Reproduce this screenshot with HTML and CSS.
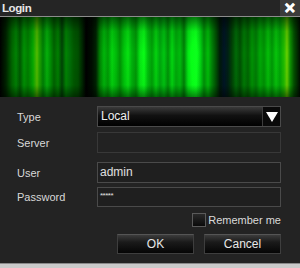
FILE: index.html
```html
<!DOCTYPE html>
<html>
<head>
<meta charset="utf-8">
<link rel="stylesheet" href="styles.css">
</head>
<body>
<div class="dialog">
  <div class="titlebar">
    <span class="title">Login</span>
    <span class="close">✕</span>
  </div>
  <div class="banner"></div>
  <div class="form">
    <div class="row r-type">
      <span class="label">Type</span>
      <div class="select">
        <span class="select-text">Local</span>
        <span class="arrow"><svg width="12" height="10" viewBox="0 0 12 10"><path d="M0 0 H12 L6 10 Z" fill="#fff"/></svg></span>
      </div>
    </div>
    <div class="row r-server">
      <span class="label">Server</span>
      <div class="field disabled"></div>
    </div>
    <div class="row r-user">
      <span class="label">User</span>
      <div class="field">admin</div>
    </div>
    <div class="row r-pass">
      <span class="label">Password</span>
      <div class="field pass">*****</div>
    </div>
    <div class="remember">
      <span class="check"></span>
      <span class="remember-text">Remember me</span>
    </div>
    <div class="buttons">
      <div class="btn ok">OK</div>
      <div class="btn cancel">Cancel</div>
    </div>
  </div>
  <div class="bottom"></div>
</div>
</body>
</html>
```

FILE: styles.css
```css
html, body {
  margin: 0;
  padding: 0;
  background: #c9c9c9;
}
body {
  font-family: "Liberation Sans", Arial, sans-serif;
  font-size: 11px;
  color: #dcdcdc;
}
.dialog {
  width: 300px;
  height: 268px;
  display: flex;
  flex-direction: column;
  background: #232323;
}
.titlebar {
  height: 16px;
  display: flex;
  align-items: stretch;
  justify-content: space-between;
  background: #252525;
  border-bottom: 1px solid #8c8c8c;
}
.title {
  font-weight: bold;
  font-size: 11.5px;
  letter-spacing: -0.4px;
  color: #e8e8e8;
  line-height: 16px;
  padding-left: 2px;
}
.close {
  width: 20px;
  background: #3b3b3b;
  color: #fff;
  font-weight: bold;
  font-size: 14px;
  line-height: 16px;
  text-align: center;
  -webkit-text-stroke: 0.8px #fff;
}
.banner {
  height: 80px;
  filter: brightness(1.3) saturate(1.25);
  background:
    linear-gradient(to bottom, rgba(0,0,0,0.55) 0%, rgba(0,0,0,0.1) 18%, rgba(0,0,0,0) 45%, rgba(0,0,0,0.05) 85%, rgba(0,0,0,0.5) 100%),
    linear-gradient(to right,
      #000 0px, #021a02 6px, #0a4a0a 12px, #0d5e10 16px, #06400a 20px, #0f6a12 24px, #0a5a0a 28px,
      #167a12 33px, #4a8a10 37px, #2a7a12 39px, #0c5c10 43px, #17801a 47px, #0e6a12 50px, #07480a 54px,
      #0c5c0e 58px, #04300a 62px, #0e6010 66px, #0a5010 70px, #054008 74px, #073a08 78px, #031e05 82px,
      #000 86px, #010a02 92px, #031a05 96px, #0a6010 100px, #13841a 104px, #0e7014 108px, #1a9a20 112px,
      #14881a 116px, #0c6a12 120px, #15901c 124px, #1ea524 128px, #12801a 132px, #0d6e14 136px,
      #1ea826 140px, #22b82a 144px, #158a1c 148px, #0f7416 152px, #1a9a20 156px, #10781a 160px,
      #159020 164px, #0c6a14 168px, #1a9c22 172px, #0f7a18 176px, #14881c 180px, #0b5e12 184px,
      #1ca826 188px, #22c02c 192px, #26c630 196px, #1aa024 200px, #0c6a14 204px, #138a1a 208px,
      #0a5e12 212px, #063a0a 216px, #021208 220px, #03101a 224px, #031810 228px, #05300a 232px,
      #0a4e10 236px, #063a0a 240px, #0c5a10 244px, #0a4a0c 248px, #0f6a12 252px, #0a5a10 256px,
      #127a16 260px, #0d6a12 264px, #188a1a 268px, #106e14 272px, #1a8e1c 276px, #127816 280px,
      #2a8a14 284px, #5a9a18 287px, #1a6e12 290px, #0a3a08 294px, #020a02 300px);
}
.form {
  flex: 1;
  display: flex;
  flex-direction: column;
  padding: 9px 19px 0 17px;
}
.row {
  display: flex;
  align-items: center;
}
.label {
  width: 80px;
  color: #d8d8d8;
}
.r-type { height: 21px; }
.r-server { height: 21px; margin-top: 5px; }
.r-user { height: 21px; margin-top: 9px; }
.r-pass { height: 20px; margin-top: 4px; }
.select {
  flex: 1;
  height: 21px;
  box-sizing: border-box;
  border: 1px solid #4a4a4a;
  display: flex;
  align-items: stretch;
  background: linear-gradient(to bottom, #3a3a3a 0%, #111 45%, #000 100%);
}
.select-text {
  flex: 1;
  padding-left: 3px;
  line-height: 19px;
  font-size: 12px;
  color: #f0f0f0;
}
.arrow {
  width: 17px;
  border-left: 1px solid #3c3c3c;
  display: flex;
  align-items: center;
  justify-content: center;
  background: #0a0a0a;
}
.field {
  flex: 1;
  height: 100%;
  box-sizing: border-box;
  border: 1px solid #4a4a4a;
  background: #1f1f1f;
  padding-left: 2px;
  font-size: 12px;
  line-height: 18px;
  color: #e0e0e0;
}
.field.disabled {
  border-color: #383838;
  background: #222;
}
.field.pass {
  font-size: 8px;
  line-height: 16px;
  letter-spacing: -0.5px;
}
.remember {
  display: flex;
  align-items: center;
  justify-content: flex-end;
  margin-top: 6px;
  height: 14px;
}
.check {
  width: 12px;
  height: 12px;
  border: 1px solid #5a5a5a;
  background: linear-gradient(to bottom, #2a2a2a, #0a0a0a);
  margin-right: 2px;
}
.remember-text {
  color: #dadada;
  font-size: 11px;
}
.buttons {
  display: flex;
  justify-content: flex-end;
  gap: 10px;
  margin-top: 7px;
}
.btn {
  width: 77px;
  height: 20px;
  box-sizing: border-box;
  border: 1px solid #3e3e3e;
  border-top-color: #555;
  background: linear-gradient(to bottom, #3c3c3c 0%, #1a1a1a 40%, #050505 100%);
  color: #e8e8e8;
  font-size: 12px;
  line-height: 18px;
  text-align: center;
}
.bottom {
  height: 4px;
  border-top: 1px solid #8a8a8a;
  background: #cacaca;
}
```
